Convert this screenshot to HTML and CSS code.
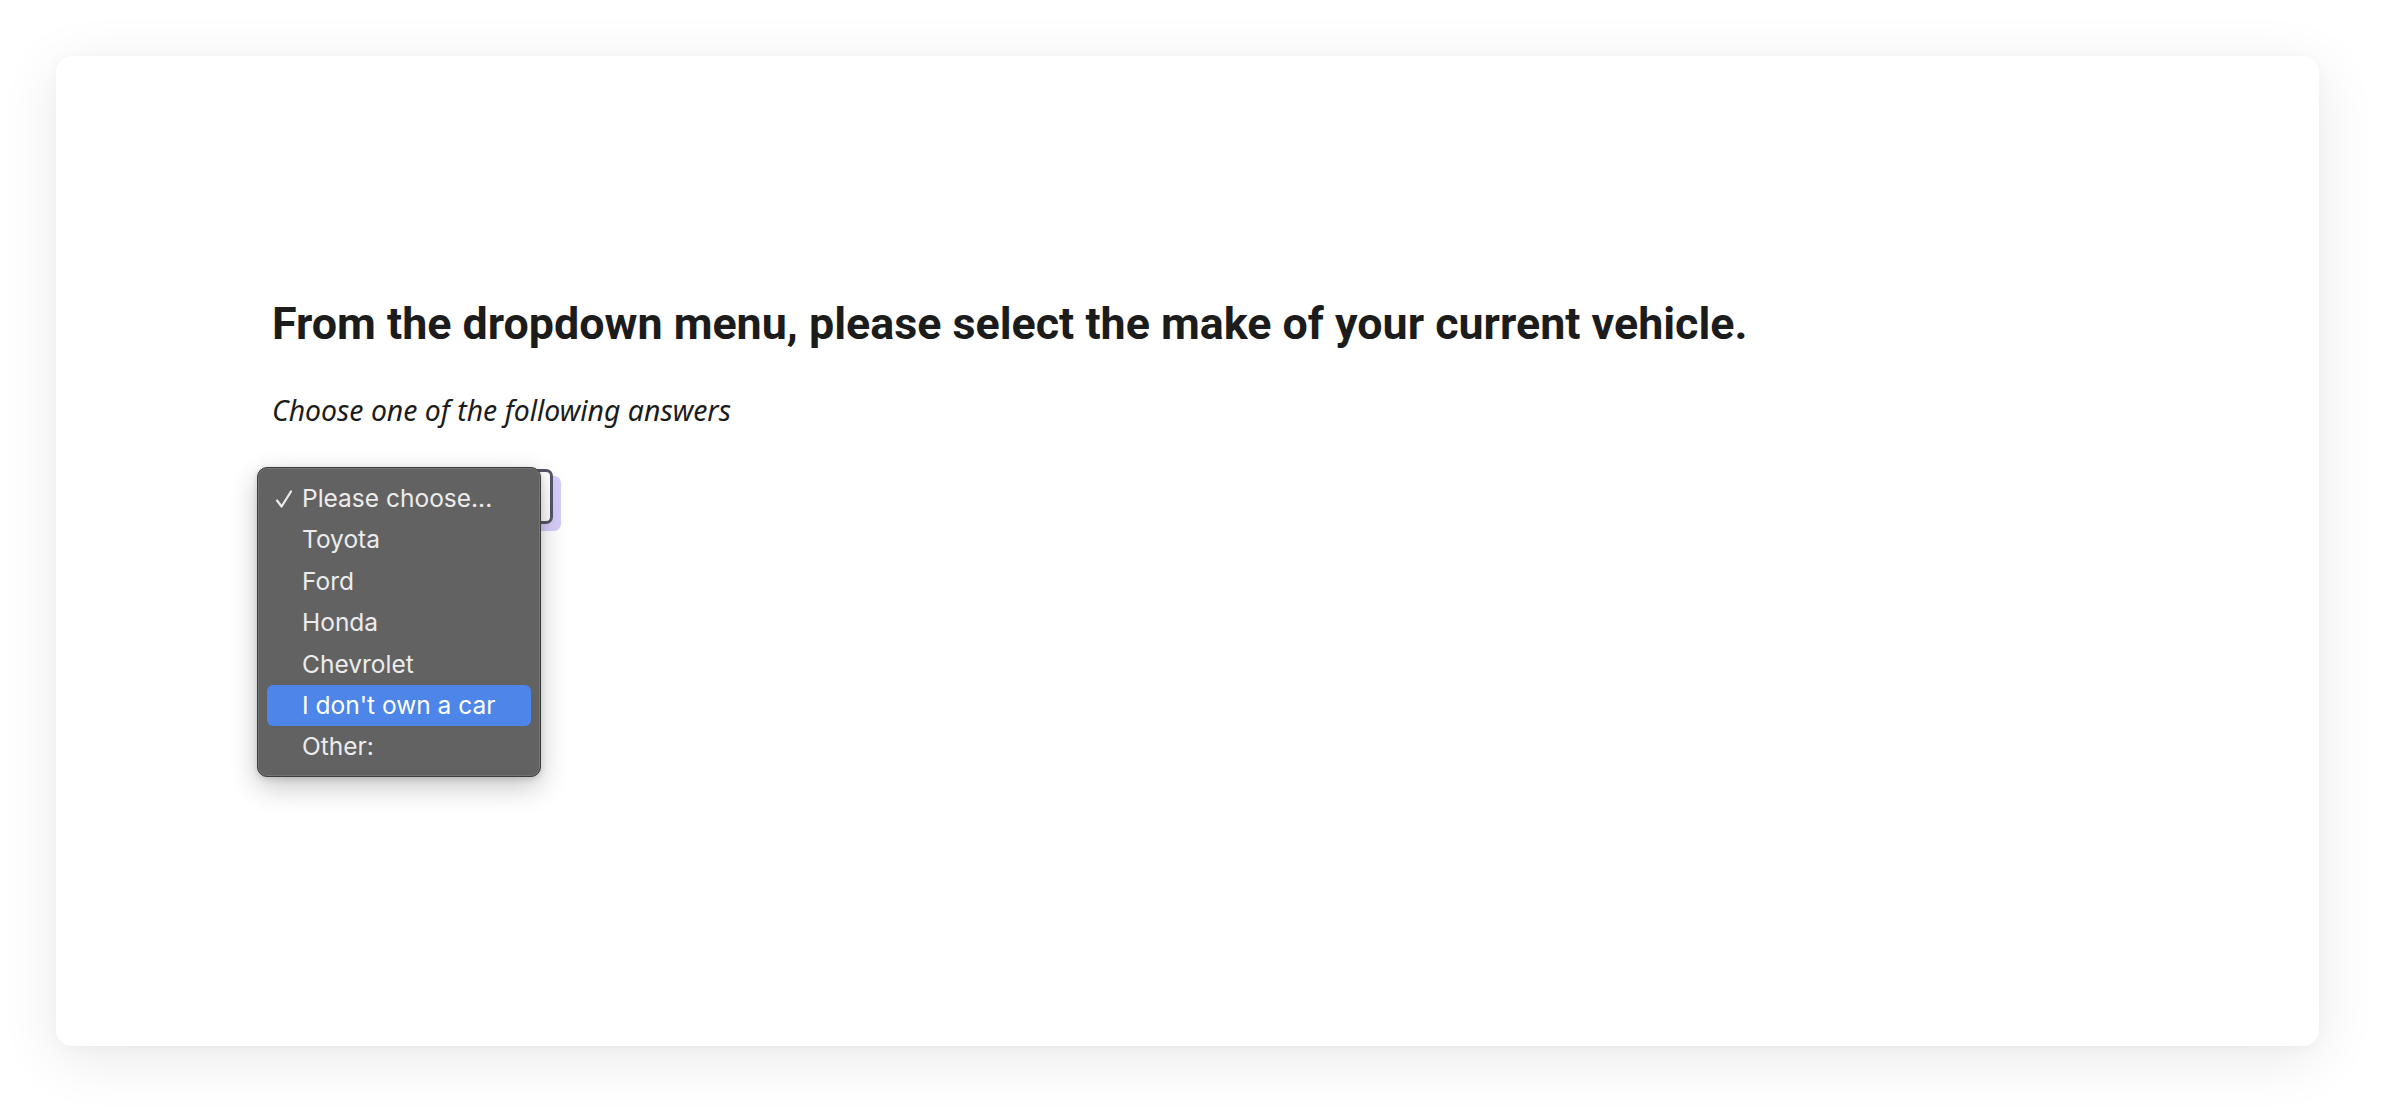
FILE: index.html
```html
<!DOCTYPE html>
<html lang="en">
<head>
<meta charset="utf-8">
<title>Vehicle survey</title>
<link rel="stylesheet" href="styles.css">
</head>
<body>
<main class="card">
  <section class="question">
    <h1 class="title">From the dropdown menu, please select the make of your current vehicle.</h1>
    <p class="hint">Choose one of the following answers</p>
    <div class="select-wrap">
      <div class="select"></div>
      <ul class="menu">
        <li class="item"><svg class="check" viewBox="0 0 18 20" width="18" height="20"><path d="M2 11.5 L6.6 17.5 L16 2.5" fill="none" stroke="#ececec" stroke-width="2.2" stroke-linecap="round" stroke-linejoin="round"/></svg>Please choose...</li>
        <li class="item">Toyota</li>
        <li class="item">Ford</li>
        <li class="item">Honda</li>
        <li class="item">Chevrolet</li>
        <li class="item active">I don't own a car</li>
        <li class="item">Other:</li>
      </ul>
    </div>
  </section>
</main>
</body>
</html>
```

FILE: styles.css
```css
html, body {
  margin: 0;
  padding: 0;
  background: #ffffff;
}
body {
  width: 2384px;
  height: 1110px;
  overflow: hidden;
  padding: 56px 65px 64px 56px;
  box-sizing: border-box;
  font-family: "Open Sans", "Noto Sans", sans-serif;
}
.card {
  width: 2263px;
  height: 990px;
  background: #ffffff;
  border-radius: 16px;
  box-shadow: 0 12px 60px rgba(0, 0, 0, 0.09), 0 2px 12px rgba(0, 0, 0, 0.03);
  box-sizing: border-box;
  padding: 238px 0 0 216px;
}
.title {
  margin: 0;
  font-family: "Roboto", sans-serif;
  font-weight: 700;
  font-size: 44.8px;
  line-height: 60px;
  color: #1c1c1c;
  letter-spacing: 0;
}
.hint {
  margin: 36px 0 0;
  font-family: "Noto Sans", sans-serif;
  font-style: italic;
  font-size: 28.4px;
  line-height: 40px;
  color: #1c1c1c;
}
.select-wrap {
  position: relative;
  margin-top: 39px;
  width: 281px;
}
.select {
  height: 55px;
  box-sizing: border-box;
  border: 3px solid #55566b;
  border-radius: 7px;
  background: #ffffff;
  box-shadow: 8px 7px 0 #d7cdfa;
}
.menu {
  position: absolute;
  left: -15px;
  top: -2px;
  width: 284px;
  height: 310px;
  box-sizing: border-box;
  margin: 0;
  padding: 10px 9px;
  list-style: none;
  background: #626262;
  border: 1px solid #3e3e3e;
  border-radius: 10px;
  box-shadow: inset 0 0 0 1px rgba(255, 255, 255, 0.12), 0 10px 28px rgba(0, 0, 0, 0.22), 0 2px 6px rgba(0, 0, 0, 0.15);
  font-family: "Inter", "Roboto", sans-serif;
  font-size: 24.5px;
  color: #ececec;
}
.item {
  position: relative;
  height: 41.4px;
  line-height: 41.4px;
  padding-left: 35px;
  border-radius: 6px;
  white-space: nowrap;
}
.check {
  position: absolute;
  left: 8px;
  top: 11px;
}
.active {
  background: #4d85e8;
  color: #ffffff;
}
```
